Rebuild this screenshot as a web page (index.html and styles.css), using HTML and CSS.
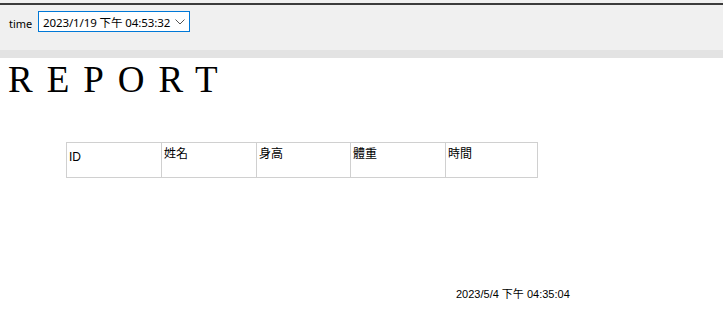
FILE: index.html
```html
<!DOCTYPE html>
<html>
<head>
<meta charset="utf-8">
<link rel="stylesheet" href="styles.css">
</head>
<body>
<div class="topstrip"></div>
<div class="toolbar">
  <span class="label">time</span>
  <div class="picker">
    <span class="value">2023/1/19 下午 04:53:32</span>
    <svg class="chev" width="10" height="6" viewBox="0 0 10 6"><path d="M0.5 0.5 L5 5 L9.5 0.5" fill="none" stroke="#555" stroke-width="1"/></svg>
  </div>
</div>
<div class="band"></div>
<main class="report">
  <h1 class="title">REPORT</h1>
  <div class="grid">
    <div class="cell id">ID</div>
    <div class="cell">姓名</div>
    <div class="cell">身高</div>
    <div class="cell">體重</div>
    <div class="cell">時間</div>
  </div>
  <div class="footer">2023/5/4 下午 04:35:04</div>
</main>
</body>
</html>
```
FILE: styles.css
```css
html, body { margin: 0; padding: 0; background: #fff; }
body { width: 723px; height: 328px; overflow: hidden; font-family: "Noto Sans CJK TC", "Noto Sans", sans-serif; }
.topstrip { height: 3px; background: #f0f0f0; border-bottom: 2px solid #3c3c3c; }
.toolbar { height: 45px; background: #f0f0f0; display: flex; align-items: flex-start; padding-top: 6px; box-sizing: border-box; }
.label { font-family: "Noto Sans", sans-serif; font-size: 11px; color: #000; margin: 5px 0 0 9px; width: 29px; }
.picker { width: 152px; height: 21px; box-sizing: border-box; border: 1px solid #0078d7; background: #fff; display: flex; align-items: center; padding: 0 0 0 4px; }
.value { font-family: "Noto Sans", "Noto Sans CJK TC", sans-serif; font-size: 11.5px; color: #000; flex: 1; letter-spacing: -0.1px; }
.chev { margin-right: 4px; }
.band { height: 8px; background: #e3e3e3; }
.report { padding: 0 0 0 8px; }
.title { margin: 2px 0 0 0; font-family: "Liberation Serif", serif; font-weight: normal; font-size: 37px; letter-spacing: 14px; line-height: 40px; color: #000; }
.grid { display: grid; grid-template-columns: 94px 95px 94px 95px 94px; width: 472px; margin: 42px 0 0 58px; border: 1px solid #d0d0d0; box-sizing: border-box; height: 36px; }
.cell { border-left: 1px solid #d0d0d0; font-size: 12px; line-height: 16px; padding: 2px 0 0 2px; color: #000; }
.cell:first-child { border-left: none; }
.cell.id { font-family: "Liberation Sans", sans-serif; padding-top: 6px; }
.footer { margin: 107px 0 0 448px; font-family: "Liberation Sans Narrow", "Liberation Sans", "Noto Sans CJK TC", sans-serif; font-size: 11px; letter-spacing: 0px; color: #000; }
```
